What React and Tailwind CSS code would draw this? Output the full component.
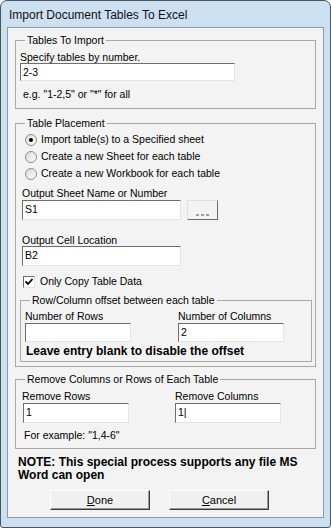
const sunken =
  "bg-white border border-t-[#6d6d6d] border-l-[#6d6d6d] border-b-[#e4e4e4] border-r-[#e4e4e4] px-[2px] text-[10.5px] leading-[16px] text-black";

function Field({ value, className }) {
  return (
    <div className={`${sunken} ${className}`}>
      {value}
    </div>
  );
}

function Radio({ checked, label }) {
  return (
    <div className="h-[17px] flex items-center">
      <span className="ml-[5px] w-[12px] h-[12px] rounded-full border border-[#8e8f8f] bg-gradient-to-br from-[#d8d8d8] to-white flex items-center justify-center">
        {checked && <span className="w-[4px] h-[4px] rounded-full bg-black" />}
      </span>
      <span className="ml-[4px]">{label}</span>
    </div>
  );
}

function Button({ children, className }) {
  return (
    <div
      className={`h-[20px] border border-t-white border-l-white border-b-[#3a3a3a] border-r-[#3a3a3a] shadow-[inset_-1px_-1px_0_#9a9a9a] bg-[#f0f0f0] flex items-center justify-center ${className}`}
    >
      {children}
    </div>
  );
}

export default function App() {
  return (
    <div className="w-[331px] h-[528px] bg-[#cde0f2] border border-[#4a545e] rounded-t-[7px] rounded-b-[3px] flex flex-col font-['Liberation_Sans',Arial,sans-serif] text-[10.5px] text-black">
      {/* title bar */}
      <div className="h-[26px] pl-[8px] pt-[1px] flex items-center text-[12px] text-[#111]">
        Import Document Tables To Excel
      </div>

      {/* client area */}
      <div className="mx-[6px] mb-[9px] flex-1 border border-[#8b9bae] bg-[#f3f3f3] flex flex-col">
        {/* Tables To Import */}
        <fieldset className="mx-[7px] mt-[5px] border border-[#a8a8a8] pl-[4px] pr-[3px] pb-[8px]">
          <legend className="ml-[5px] px-[2px] leading-[14px]">Tables To Import</legend>
          <div className="mt-[4px] h-[12px] leading-[12px]">Specify tables by number.</div>
          <Field value="2-3" className="w-[215px] h-[18px]" />
          <div className="mt-[7px] ml-[3px] h-[12px] leading-[12px]">e.g. "1-2,5" or "*" for all</div>
        </fieldset>

        {/* Table Placement */}
        <fieldset className="mx-[7px] mt-[7px] border border-[#a8a8a8] pl-[4px] pr-[3px] pb-[4px]">
          <legend className="ml-[5px] px-[2px] leading-[14px]">Table Placement</legend>
          <div className="mt-[1px]">
            <Radio checked label="Import table(s) to a Specified sheet" />
            <Radio label="Create a new Sheet for each table" />
            <Radio label="Create a new Workbook for each table" />
          </div>
          <div className="mt-[5px] ml-[2px] h-[12px] leading-[12px]">Output Sheet Name or Number</div>
          <div className="mt-[1px] ml-[2px] flex gap-[6px]">
            <Field value="S1" className="w-[159px] h-[20px]" />
            <div className="w-[31px] h-[20px] border border-t-[#e0e0e0] border-l-[#e0e0e0] border-b-[#6a6a6a] border-r-[#6a6a6a] bg-[#f3f3f3] flex items-end justify-center pb-[3px] gap-[2px]">
              <span className="w-[3px] h-[2px] bg-[#a0a0a0]" />
              <span className="w-[3px] h-[2px] bg-[#a0a0a0]" />
              <span className="w-[3px] h-[2px] bg-[#a0a0a0]" />
            </div>
          </div>
          <div className="mt-[14px] ml-[2px] h-[12px] leading-[12px]">Output Cell Location</div>
          <Field value="B2" className="ml-[2px] w-[159px] h-[20px]" />
          <div className="mt-[9px] h-[14px] flex items-center">
            <span className="ml-[3px] w-[12px] h-[12px] bg-white border border-t-[#6d6d6d] border-l-[#6d6d6d] border-b-[#e4e4e4] border-r-[#e4e4e4] flex items-center justify-center">
              <svg width="8" height="8" viewBox="0 0 8 8">
                <path d="M0.5 3.5 L3 6 L7.5 1" fill="none" stroke="black" strokeWidth="1.8" />
              </svg>
            </span>
            <span className="ml-[5px]">Only Copy Table Data</span>
          </div>

          <fieldset className="mt-[4px] border border-[#a8a8a8] pl-[4px] pb-[4px]">
            <legend className="ml-[5px] px-[2px] leading-[14px]">Row/Column offset between each table</legend>
            <div className="mt-[3px] flex">
              <div className="w-[153px]">
                <div className="h-[12px] leading-[12px]">Number of Rows</div>
                <Field value="" className="mt-[1px] w-[106px] h-[19px]" />
              </div>
              <div>
                <div className="h-[12px] leading-[12px]">Number of Columns</div>
                <Field value="2" className="mt-[1px] w-[106px] h-[19px]" />
              </div>
            </div>
            <div className="mt-[3px] ml-[1px] h-[12px] leading-[12px] font-bold text-[12px]">
              Leave entry blank to disable the offset
            </div>
          </fieldset>
        </fieldset>

        {/* Remove Columns or Rows */}
        <fieldset className="mx-[7px] mt-[5px] border border-[#a8a8a8] pl-[6px] pr-[3px] pb-[7px]">
          <legend className="ml-[3px] px-[2px] leading-[14px]">Remove Columns or Rows of Each Table</legend>
          <div className="mt-[4px] flex">
            <div className="w-[153px]">
              <div className="h-[12px] leading-[12px]">Remove Rows</div>
              <Field value="1" className="mt-[1px] ml-[1px] w-[106px] h-[20px]" />
            </div>
            <div>
              <div className="h-[12px] leading-[12px]">Remove Columns</div>
              <Field value="1|" className="mt-[1px] w-[106px] h-[20px]" />
            </div>
          </div>
          <div className="mt-[6px] ml-[2px] h-[12px] leading-[12px]">For example: "1,4-6"</div>
        </fieldset>

        <div className="mt-[7px] ml-[10px] font-bold leading-[13px] text-[12px]">
          NOTE: This special process supports any file MS
          <br />
          Word can open
        </div>

        <div className="mt-[8px] ml-[42px] flex gap-[19px] text-[11px]">
          <Button className="w-[100px]">
            <span className="underline">D</span>one
          </Button>
          <Button className="w-[100px]">
            <span className="underline">C</span>ancel
          </Button>
        </div>
      </div>
    </div>
  );
}
